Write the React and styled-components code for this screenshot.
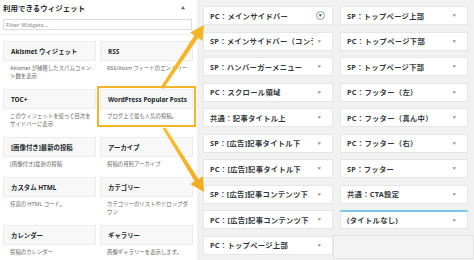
import React from "react";
import styled, { createGlobalStyle } from "styled-components";

const Global = createGlobalStyle`
  html, body { margin: 0; padding: 0; }
  body {
    background: #f1f1f1;
    font-family: "Noto Sans", "Noto Sans CJK JP", sans-serif;
    color: #23282d;
    overflow: hidden;
  }
`;

const Page = styled.div`
  position: relative;
  width: 474px;
  height: 260px;
  display: flex;
  background: #f1f1f1;
  overflow: hidden;
`;

const LeftPanel = styled.div`
  width: 197px;
  flex: none;
  background: #fff;
  display: flex;
  flex-direction: column;
`;

const PanelHeader = styled.div`
  padding: 0 4px 0 3px;
  border-bottom: 1px solid #eeeeee;
  height: 36px;
  box-sizing: border-box;
`;

const TitleRow = styled.div`
  display: flex;
  align-items: center;
  justify-content: space-between;
  height: 15px;
`;

const PanelTitle = styled.div`
  font-size: 7.4px;
  font-weight: 700;
  letter-spacing: 0.1px;
  color: #23282d;
`;

const UpCaret = styled.span`
  font-size: 4px;
  color: #666;
  margin-right: 8px;
`;

const Filter = styled.div`
  margin-top: 4px;
  height: 11px;
  border: 1px solid #dcdcdc;
  box-sizing: border-box;
  font-size: 5.8px;
  color: #8a8a8a;
  display: flex;
  align-items: center;
  padding-left: 2px;
  width: 189px;
`;

const Grid = styled.div`
  display: grid;
  grid-template-columns: 93px 93px;
  column-gap: 4px;
  row-gap: 5px;
  padding: 6px 0 0 3px;
  align-items: start;
`;

const Card = styled.div`
  outline: ${(p) => (p.$active ? "2px solid #f4b42a" : "none")};
  outline-offset: 1px;
`;

const CardTitle = styled.div`
  height: 20px;
  box-sizing: border-box;
  background: #f8f8f8;
  border: 1px solid #ececec;
  display: flex;
  align-items: center;
  padding-left: 7px;
  font-size: 6.4px;
  font-weight: 700;
  color: #23282d;
  white-space: nowrap;
  overflow: hidden;
`;

const CardDesc = styled.div`
  padding: 3px 2px 4px 7px;
  font-size: 5.4px;
  line-height: 8px;
  color: #666;
`;

const Sidebars = styled.div`
  flex: 1;
  display: flex;
  gap: 7px;
  padding: 6px 6px 0 6px;
`;

const Column = styled.div`
  width: ${(p) => p.$w}px;
  display: flex;
  flex-direction: column;
  gap: 6.5px;
`;

const SidebarBox = styled.div`
  height: 19px;
  box-sizing: border-box;
  background: #fff;
  border: 1px solid #e6e6e6;
  border-top: ${(p) => (p.$drop ? "2px solid #79c7e3" : "1px solid #e6e6e6")};
  display: flex;
  align-items: center;
  justify-content: space-between;
  gap: 2px;
  padding: 0 8px 0 6px;
  font-size: 7.3px;
  font-weight: 700;
  letter-spacing: 0.3px;
  color: #32373c;
  white-space: nowrap;
`;

const BoxLabel = styled.span`
  overflow: hidden;
  flex: 1;
  min-width: 0;
`;

const Caret = styled.span`
  flex: none;
  width: 9px;
  display: flex;
  justify-content: center;
  font-size: 3.5px;
  color: #9a9a9a;
`;

const CircleCaret = styled.span`
  flex: none;
  width: 9px;
  height: 9px;
  margin-right: -1px;
  border: 1px solid #7a9cc6;
  border-radius: 50%;
  box-sizing: border-box;
  display: flex;
  align-items: center;
  justify-content: center;
  font-size: 3.5px;
  color: #555;
`;

const Placeholder = styled.div`
  height: 22px;
  margin-left: -7px;
  margin-right: -6px;
  margin-top: -1px;
  background: #f3f3f3;
  border: 1px solid #e4e4e4;
`;

const Overlay = styled.svg`
  position: absolute;
  left: 0;
  top: 0;
  pointer-events: none;
`;

const widgets = [
  ["Akismet ウィジェット", "Akismet が捕獲したスパムコメント数を表示"],
  ["RSS", "RSS/Atom フィードのエントリー"],
  ["TOC+", "このウィジェットを使って目次をサイドバーに表示"],
  ["WordPress Popular Posts", "ブログ上で最も人気の投稿。", true],
  ["[画像付き]最新の投稿", "[画像付き]最新の投稿"],
  ["アーカイブ", "投稿の月別アーカイブ"],
  ["カスタム HTML", "任意の HTML コード。"],
  ["カテゴリー", "カテゴリーのリストやドロップダウン"],
  ["カレンダー", "投稿のカレンダー"],
  ["ギャラリー", "画像ギャラリーを表示します。"],
];

const mid = [
  "PC：メインサイドバー",
  "SP：メインサイドバー（コンテンツ下）",
  "SP：ハンバーガーメニュー",
  "PC：スクロール領域",
  "共通：記事タイトル上",
  "SP：[広告]記事タイトル下",
  "PC：[広告]記事タイトル下",
  "SP：[広告]記事コンテンツ下",
  "PC：[広告]記事コンテンツ下",
  "PC：トップページ上部",
];

const right = [
  "SP：トップページ上部",
  "PC：トップページ下部",
  "SP：トップページ下部",
  "PC：フッター（左）",
  "PC：フッター（真ん中）",
  "PC：フッター（右）",
  "SP：フッター",
  "共通：CTA設定",
  "(タイトルなし)",
];

function arrowPoints(x1, y1, x2, y2, sw = 4.5, hw = 15, hl = 14) {
  const dx = x2 - x1;
  const dy = y2 - y1;
  const len = Math.hypot(dx, dy);
  const ux = dx / len;
  const uy = dy / len;
  const nx = -uy;
  const ny = ux;
  const bx = x2 - ux * hl;
  const by = y2 - uy * hl;
  const p = (x, y) => `${x.toFixed(1)},${y.toFixed(1)}`;
  return [
    p(x1 + nx * sw * 0.35, y1 + ny * sw * 0.35),
    p(bx + nx * sw / 2, by + ny * sw / 2),
    p(bx + nx * hw / 2, by + ny * hw / 2),
    p(x2, y2),
    p(bx - nx * hw / 2, by - ny * hw / 2),
    p(bx - nx * sw / 2, by - ny * sw / 2),
    p(x1 - nx * sw * 0.35, y1 - ny * sw * 0.35),
  ].join(" ");
}

export default function App() {
  return (
    <>
      <Global />
      <Page>
        <LeftPanel>
          <PanelHeader>
            <TitleRow>
              <PanelTitle>利用できるウィジェット</PanelTitle>
              <UpCaret>▲</UpCaret>
            </TitleRow>
            <Filter>Filter Widgets...</Filter>
          </PanelHeader>
          <Grid>
            {widgets.map(([t, d, a]) => (
              <Card key={t} $active={a}>
                <CardTitle>{t}</CardTitle>
                <CardDesc>{d}</CardDesc>
              </Card>
            ))}
          </Grid>
        </LeftPanel>
        <Sidebars>
          <Column $w={130}>
            {mid.map((t, i) => (
              <SidebarBox key={t}>
                <BoxLabel>{t}</BoxLabel>
                {i === 0 ? <CircleCaret>▼</CircleCaret> : <Caret>▼</Caret>}
              </SidebarBox>
            ))}
          </Column>
          <Column $w={128}>
            {right.map((t, i) => (
              <SidebarBox key={t} $drop={i === right.length - 1}>
                <BoxLabel>{t}</BoxLabel>
                <Caret>▼</Caret>
              </SidebarBox>
            ))}
            <Placeholder />
          </Column>
        </Sidebars>
        <Overlay width="474" height="260" viewBox="0 0 474 260">
          <defs>
            <linearGradient id="ag" x1="0" y1="0" x2="1" y2="1">
              <stop offset="0" stopColor="#f7c234" />
              <stop offset="1" stopColor="#f2a91d" />
            </linearGradient>
          </defs>
          <polygon points={arrowPoints(162, 88, 204, 25)} fill="url(#ag)" />
          <polygon points={arrowPoints(164, 128, 204, 192)} fill="url(#ag)" />
        </Overlay>
      </Page>
    </>
  );
}
